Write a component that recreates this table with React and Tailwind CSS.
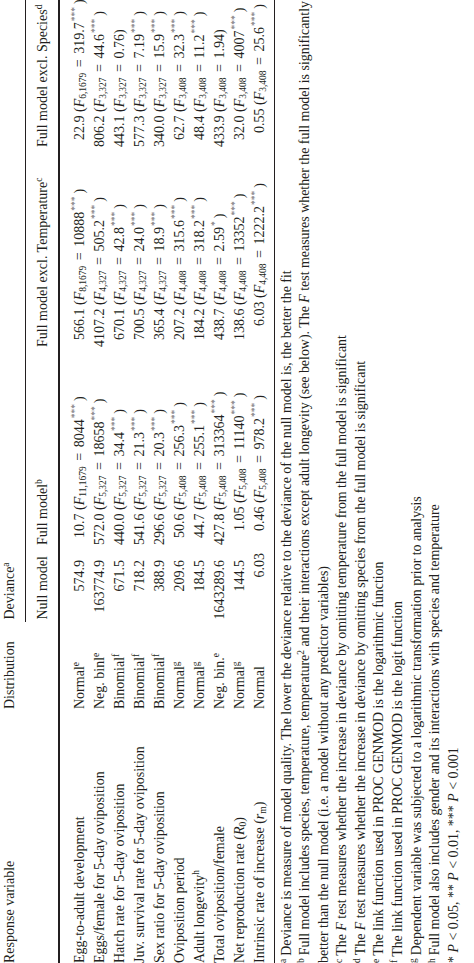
import React from "react";

const Stars = ({ s }) =>
  s ? <sup className="text-[9.5px] text-[#666] ml-[1px] mr-[3px] top-[-0.6em]">{s}</sup> : null;

const Num = ({ w, i, d }) => (
  <>
    <span className={`inline-block text-right ${w}`}>{i}</span>.{d}
  </>
);

const FS = ({ df, v, s }) => (
  <>
    {" "}(<i>F</i>
    <sub className="text-[9.5px]">{df}</sub> <span className="mx-[2px]">=</span> {v}
    <Stars s={s} />)
  </>
);

const rows = [
  { label: <>Egg-to-adult development</>, dist: "Normal", ds: "e", nul: ["574", "9"], full: ["10", "7", "11,1679", "8044", "***"], temp: ["566", "1", "8,1679", "10888", "***"], spec: ["22", "9", "6,1679", "319.7", "***"] },
  { label: <>Eggs/female for 5-day oviposition</>, dist: "Neg. binl", ds: "e", nul: ["163774", "9"], full: ["572", "0", "5,327", "18658", "***"], temp: ["4107", "2", "4,327", "505.2", "***"], spec: ["806", "2", "3,327", "44.6", "***"] },
  { label: <>Hatch rate for 5-day oviposition</>, dist: "Binomial", ds: "f", nul: ["671", "5"], full: ["440", "0", "5,327", "34.4", "***"], temp: ["670", "1", "4,327", "42.8", "***"], spec: ["443", "1", "3,327", "0.76", ""] },
  { label: <>Juv. survival rate for 5-day oviposition</>, dist: "Binomial", ds: "f", nul: ["718", "2"], full: ["541", "6", "5,327", "21.3", "***"], temp: ["700", "5", "4,327", "24.0", "***"], spec: ["577", "3", "3,327", "7.19", "***"] },
  { label: <>Sex ratio for 5-day oviposition</>, dist: "Binomial", ds: "f", nul: ["388", "9"], full: ["296", "6", "5,327", "20.3", "***"], temp: ["365", "4", "4,327", "18.9", "***"], spec: ["340", "0", "3,327", "15.9", "***"] },
  { label: <>Oviposition period</>, dist: "Normal", ds: "g", nul: ["209", "6"], full: ["50", "6", "5,408", "256.3", "***"], temp: ["207", "2", "4,408", "315.6", "***"], spec: ["62", "7", "3,408", "32.3", "***"] },
  { label: <>Adult longevity<sup className="text-[9.5px]">h</sup></>, dist: "Normal", ds: "g", nul: ["184", "5"], full: ["44", "7", "5,408", "255.1", "***"], temp: ["184", "2", "4,408", "318.2", "***"], spec: ["48", "4", "3,408", "11.2", "***"] },
  { label: <>Total oviposition/female</>, dist: "Neg. bin.", ds: "e", nul: ["1643289", "6"], full: ["427", "8", "5,408", "313364", "***"], temp: ["438", "7", "4,408", "2.59", "*"], spec: ["433", "9", "3,408", "1.94", ""] },
  { label: <>Net reproduction rate (<i>R</i><sub className="text-[9.5px]">0</sub>)</>, dist: "Normal", ds: "g", nul: ["144", "5"], full: ["1", "05", "5,408", "11140", "***"], temp: ["138", "6", "4,408", "13352", "***"], spec: ["32", "0", "3,408", "4007", "***"] },
  { label: <>Intrinsic rate of increase (<i>r</i><sub className="text-[9.5px]">m</sub>)</>, dist: "Normal", ds: "", nul: ["6", "03"], full: ["0", "46", "5,408", "978.2", "***"], temp: ["6", "03", "4,408", "1222.2", "***"], spec: ["0", "55", "3,408", "25.6", "***"] },
];

const grid = "grid grid-cols-[254px_89.5px_74.5px_198px_200px_1fr] whitespace-nowrap";

const Foot = ({ m, children }) => (
  <div className="h-[18.6px] leading-[18.6px] whitespace-nowrap">
    {m && <sup className="text-[9.5px] mr-[3px]">{m}</sup>}
    {children}
  </div>
);

export default function App() {
  return (
    <div className="w-[474px] h-[963px] relative overflow-hidden bg-white">
      <div className="absolute left-0 top-0 w-[963px] h-[474px] origin-top-left translate-y-[963px] -rotate-90 font-['Liberation_Serif','Times_New_Roman',serif] text-[14px] leading-[20px] text-[#231f20]">
        <div className={`${grid} h-[20px] items-center`}>
          <div>Response variable</div>
          <div>Distribution</div>
          <div className="col-span-4">
            Deviance<sup className="text-[9.5px]">a</sup>
          </div>
        </div>
        <div className="mt-[5px] ml-[341px] h-px bg-[#231f20]" />
        <div className={`${grid} mt-[7px] h-[20px] items-center`}>
          <div />
          <div />
          <div>Null model</div>
          <div>
            Full model<sup className="text-[9.5px]">b</sup>
          </div>
          <div>
            Full model excl. Temperature<sup className="text-[9.5px]">c</sup>
          </div>
          <div>
            Full model excl. Species<sup className="text-[9.5px]">d</sup>
          </div>
        </div>
        <div className="mt-[5px] h-[1.5px] bg-[#231f20]" />
        <div className="mt-[10px]">
          {rows.map((r, k) => (
            <div key={k} className={`${grid} h-[20px] items-center`}>
              <div>{r.label}</div>
              <div>
                {r.dist}
                {r.ds && <sup className="text-[9.5px]">{r.ds}</sup>}
              </div>
              <div>
                <Num w="w-[49px]" i={r.nul[0]} d={r.nul[1]} />
              </div>
              <div>
                <Num w="w-[21px]" i={r.full[0]} d={r.full[1]} />
                <FS df={r.full[2]} v={r.full[3]} s={r.full[4]} />
              </div>
              <div>
                <Num w="w-[28px]" i={r.temp[0]} d={r.temp[1]} />
                <FS df={r.temp[2]} v={r.temp[3]} s={r.temp[4]} />
              </div>
              <div>
                <Num w="w-[21px]" i={r.spec[0]} d={r.spec[1]} />
                <FS df={r.spec[2]} v={r.spec[3]} s={r.spec[4]} />
              </div>
            </div>
          ))}
        </div>
        <div className="mt-[4px] h-px bg-[#231f20]" />
        <div className="mt-[3px] text-[13.9px]">
          <Foot m="a">
            Deviance is measure of model quality. The lower the deviance relative to the deviance of the null model is, the better the fit
          </Foot>
          <Foot m="b">
            Full model includes species, temperature, temperature<sup className="text-[9.5px]">2</sup> and their interactions except adult longevity (see below). The <i>F</i> test measures whether the full model is significantly
          </Foot>
          <Foot>better than the null model (i.e. a model without any predictor variables)</Foot>
          <Foot m="c">
            The <i>F</i> test measures whether the increase in deviance by omitting temperature from the full model is significant
          </Foot>
          <Foot m="d">
            The <i>F</i> test measures whether the increase in deviance by omitting species from the full model is significant
          </Foot>
          <Foot m="e">The link function used in PROC GENMOD is the logarithmic function</Foot>
          <Foot m="f">The link function used in PROC GENMOD is the logit function</Foot>
          <Foot m="g">Dependent variable was subjected to a logarithmic transformation prior to analysis</Foot>
          <Foot m="h">Full model also includes gender and its interactions with species and temperature</Foot>
          <Foot>
            * <i>P</i> &lt; 0.05, ** <i>P</i> &lt; 0.01, *** <i>P</i> &lt; 0.001
          </Foot>
        </div>
      </div>
    </div>
  );
}
